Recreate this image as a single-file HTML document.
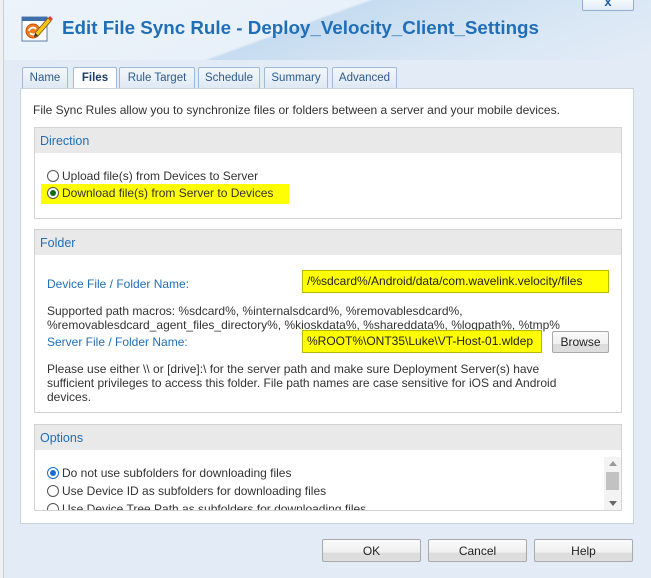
<!DOCTYPE html>
<html><head><style>
*{box-sizing:border-box}
body{margin:0;width:651px;height:578px;overflow:hidden;font-family:"Liberation Sans",sans-serif;font-size:12px;color:#333;position:relative;
background:#e3ecf6;}
.bg2{position:absolute;left:0;top:60px;width:651px;height:518px;background:#e3ecf6}
.abs{position:absolute}
.strip{position:absolute;left:0;top:0;width:4px;height:578px;background:#eef0f2;border-right:1px solid #c9cfd6}
.title{left:62px;top:17px;font-size:18.8px;font-weight:bold;color:#1f6fb8;white-space:nowrap}
.tab{top:67px;height:22px;border:1px solid #9fb9d8;border-bottom:none;background:linear-gradient(#f3f7fb,#dde8f4);color:#2e5b8a;font-size:11.5px;text-align:center;line-height:20px;border-radius:2px 2px 0 0}
.tab.sel{background:#fff;color:#1b3d66;font-weight:bold;height:23px}
.panel{left:20px;top:88px;width:614px;height:436px;background:#fff;border:1px solid #c8d2dc}
.sec{position:absolute;left:13px;width:588px;border:1px solid #d3d3d3;background:#fff}
.sh{height:25px;background:#e9e9e9;color:#1f6fb8;font-size:12.5px;line-height:26px;padding-left:5px}
.hl{background:#ffff00}
.radio{display:inline-block;width:12px;height:12px;border:1px solid #555;border-radius:50%;vertical-align:-2px;margin-right:3px;background:#fff;position:relative}
.radio.on::after{content:"";position:absolute;left:2px;top:2px;width:6px;height:6px;border-radius:50%;background:#0a6f14}
.radio.blue{border-color:#1a6fd0}
.radio.blue::after{background:#1a6fd0}
.lbl{color:#1f6fb8}
.inp{position:absolute;border:1px solid #b8b800;background:#ffff00;color:#222;padding:0 4px;line-height:21px;height:23px;white-space:nowrap;font-size:12px}
.btn{position:absolute;border:1px solid #a9a9a9;border-radius:2px;background:linear-gradient(#fafafa 0%,#f0f0f0 60%,#dcdcdc 61%,#dedede 100%);text-align:center;color:#222}
</style></head><body>
<div class="abs" style="left:0;top:0;width:651px;height:60px;background:linear-gradient(160deg,#ecf3fa 0%,#e8f0f9 45%,#c6dcf0 46%,#d6e5f4 70%,#e3ecf6 100%)"></div>
<div class="strip"></div>
<div class="btn" style="left:582px;top:-3px;width:52px;height:14px;border-color:#8fb0d0;background:linear-gradient(#fafcfe,#e2ecf6)"><span style="color:#1f5fa8;font-weight:bold;font-size:13px;position:relative;top:-4px">x</span></div>
<svg class="abs" style="left:21px;top:12px" width="32" height="32" viewBox="0 0 32 32">
<rect x="1" y="5" width="25" height="24" fill="#fff" stroke="#5a7fa8"/>
<rect x="1" y="5" width="25" height="4" fill="#3f6fa8"/>
<circle cx="12" cy="19" r="7" fill="#f07a1c" stroke="#c8500a"/>
<path d="M8 19a4 4 0 0 1 7-2M16 19a4 4 0 0 1-7 2" stroke="#fff" stroke-width="1.8" fill="none"/>
<path d="M14 21L27 6l3 3L17 24z" fill="#f5c518" stroke="#7a5a10" stroke-width="0.8"/>
<path d="M14 21l-1 4 4-1z" fill="#333"/>
<path d="M27 6l2-2 3 3-2 2z" fill="#e04040"/>
</svg>
<div class="abs title">Edit File Sync Rule - Deploy_Velocity_Client_Settings</div>

<div class="abs tab" style="left:22px;width:46px">Name</div>
<div class="abs tab sel" style="left:73px;width:44px">Files</div>
<div class="abs tab" style="left:119px;width:76px">Rule Target</div>
<div class="abs tab" style="left:198px;width:62px">Schedule</div>
<div class="abs tab" style="left:264px;width:64px">Summary</div>
<div class="abs tab" style="left:332px;width:65px">Advanced</div>

<div class="abs panel">
<div class="abs" style="left:12px;top:14px;white-space:nowrap">File Sync Rules allow you to synchronize files or folders between a server and your mobile devices.</div>

<div class="sec" style="top:38px;height:92px">
<div class="sh">Direction</div>
<div class="abs" style="left:12px;top:41px"><span class="radio"></span>Upload file(s) from Devices to Server</div>
<div class="abs hl" style="left:6px;top:56px;width:248px;height:20px;padding:2px 0 0 6px"><span class="radio on"></span>Download file(s) from Server to Devices</div>
</div>

<div class="sec" style="top:140px;height:184px">
<div class="sh">Folder</div>
<div class="abs lbl" style="left:12px;top:47px">Device File / Folder Name:</div>
<div class="inp" style="left:267px;top:40px;width:307px">/%sdcard%/Android/data/com.wavelink.velocity/files</div>
<div class="abs" style="left:12px;top:74px;line-height:14px;white-space:nowrap">Supported path macros: %sdcard%, %internalsdcard%, %removablesdcard%,<br>%removablesdcard_agent_files_directory%, %kioskdata%, %shareddata%, %logpath%, %tmp%</div>
<div class="abs lbl" style="left:12px;top:105px">Server File / Folder Name:</div>
<div class="inp" style="left:267px;top:100px;width:240px">%ROOT%\ONT35\Luke\VT-Host-01.wldep</div>
<div class="btn" style="left:517px;top:101px;width:57px;height:22px;line-height:20px">Browse</div>
<div class="abs" style="left:12px;top:132px;line-height:14px;white-space:nowrap">Please use either \\ or [drive]:\ for the server path and make sure Deployment Server(s) have<br>sufficient privileges to access this folder. File path names are case sensitive for iOS and Android<br>devices.</div>
</div>

<div class="sec" style="top:335px;height:87px;overflow:hidden">
<div class="sh">Options</div>
<div class="abs" style="left:12px;top:41px"><span class="radio on blue"></span>Do not use subfolders for downloading files</div>
<div class="abs" style="left:12px;top:59px"><span class="radio"></span>Use Device ID as subfolders for downloading files</div>
<div class="abs" style="left:12px;top:77px"><span class="radio"></span>Use Device Tree Path as subfolders for downloading files</div>
<div class="abs" style="left:569px;top:32px;width:18px;height:54px;background:#f3f3f3">
<div class="abs" style="left:5px;top:4px;width:0;height:0;border:4px solid transparent;border-bottom:5px solid #999;border-top:none"></div>
<div class="abs" style="left:2px;top:15px;width:13px;height:18px;background:#c2c2c2"></div>
<div class="abs" style="left:5px;top:44px;width:0;height:0;border:4px solid transparent;border-top:5px solid #666;border-bottom:none"></div>
</div>
</div>
</div>

<div class="btn" style="left:322px;top:539px;width:99px;height:23px;line-height:22px">OK</div>
<div class="btn" style="left:428px;top:539px;width:99px;height:23px;line-height:22px">Cancel</div>
<div class="btn" style="left:534px;top:539px;width:99px;height:23px;line-height:22px">Help</div>
</body></html>
